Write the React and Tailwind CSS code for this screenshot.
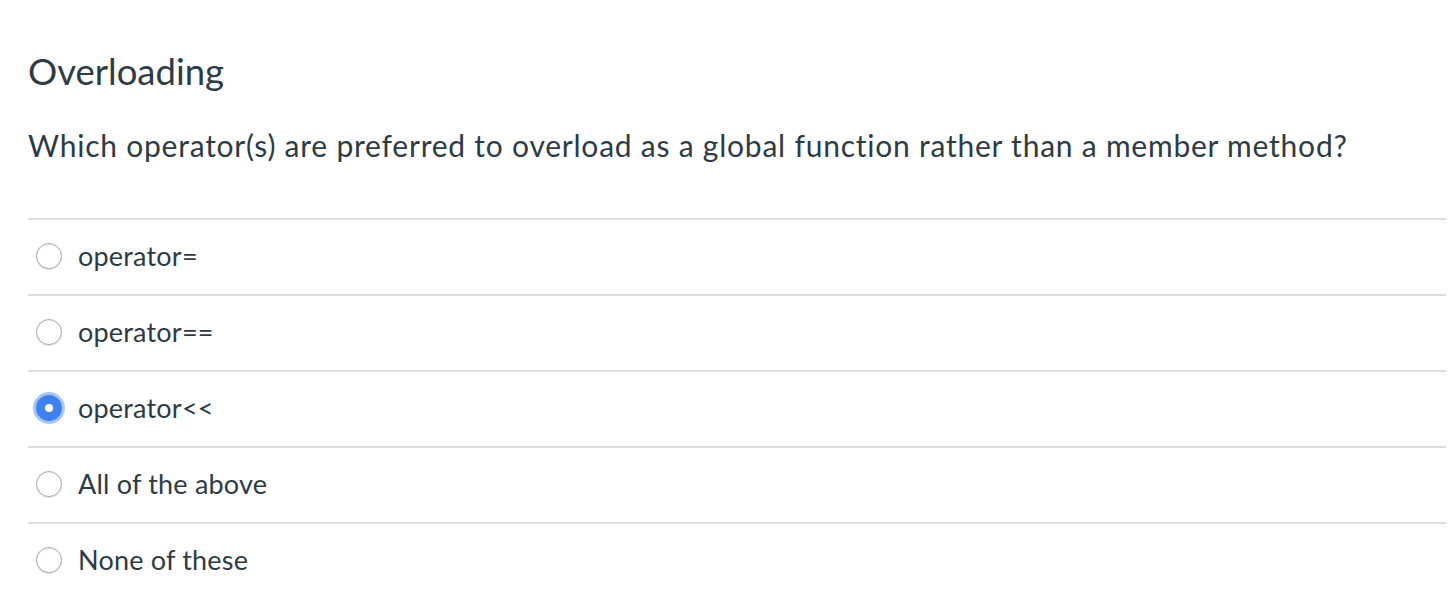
import React from "react";

const options = [
  { id: "a", label: "operator=" },
  { id: "b", label: "operator==" },
  { id: "c", label: "operator<<", checked: true },
  { id: "d", label: "All of the above" },
  { id: "e", label: "None of these" },
];

function Radio({ checked }) {
  if (checked) {
    return (
      <span className="flex h-[32px] w-[32px] shrink-0 items-center justify-center rounded-full bg-[#a9c6f5]">
        <span className="flex h-[26px] w-[26px] items-center justify-center rounded-full bg-[#3f82ee]">
          <span className="h-[8px] w-[8px] rounded-full bg-white" />
        </span>
      </span>
    );
  }
  return (
    <span className="flex h-[32px] w-[32px] shrink-0 items-center justify-center">
      <span className="h-[26px] w-[26px] rounded-full border border-[#ababab] bg-white shadow-[inset_0_1px_1px_rgba(0,0,0,0.08),0_1px_1px_rgba(0,0,0,0.12)]" />
    </span>
  );
}

export default function App() {
  return (
    <div className="min-h-[608px] bg-white pl-[28px] pr-[6px] pt-[48px] text-[#2d3b45] font-['Lato',sans-serif] [font-variant-ligatures:none]">
      <h2 className="text-[36.5px] leading-[46px] font-normal">Overloading</h2>
      <p className="mt-[31px] text-[30px] leading-[40px] tracking-[0.77px]">
        Which operator(s) are preferred to overload as a global function rather than a member method?
      </p>
      <div className="mt-[53px]">
        {options.map((opt) => (
          <label
            key={opt.id}
            className="flex h-[76px] items-center gap-[13px] border-t-2 border-[#dcdcdc] pb-[3px] pl-[5px]"
          >
            <Radio checked={opt.checked} />
            <span className="text-[27px] leading-[34px] tracking-[0.2px]">{opt.label}</span>
          </label>
        ))}
      </div>
    </div>
  );
}
